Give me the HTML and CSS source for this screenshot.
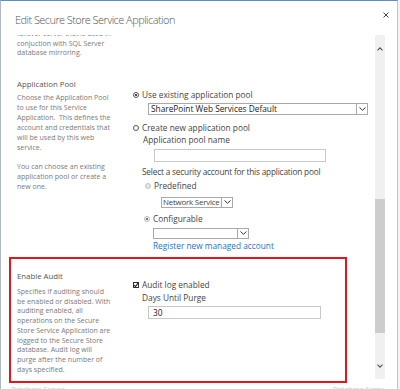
FILE: index.html
```html
<!DOCTYPE html>
<html>
<head>
<meta charset="utf-8">
<link rel="stylesheet" href="styles.css">
</head>
<body>
<div class="dialog">
  <div class="header">
    <div class="title">Edit Secure Store Service Application</div>
    <svg class="close" width="6" height="6" viewBox="0 0 6 6"><path d="M0.5 0.5L5.5 5.5M5.5 0.5L0.5 5.5" stroke="#444" stroke-width="1"/></svg>
  </div>
  <div class="body">
    <div class="content">
      <div class="row row-tail">
        <div class="left">
          <div class="desc">failover server that is used in<br>conjuction with SQL Server<br>database mirroring.</div>
        </div>
        <div class="right"></div>
      </div>

      <div class="row row-pool">
        <div class="left">
          <div class="heading">Application Pool</div>
          <div class="desc desc-pool">Choose the Application Pool<br>to use for this Service<br>Application.&nbsp; This defines the<br>account and credentials that<br>will be used by this web<br>service.<br><br>You can choose an existing<br>application pool or create a<br>new one.</div>
        </div>
        <div class="right right-pool">
          <div class="opt"><span class="radio on"></span><span>Use existing application pool</span></div>
          <div class="select sel-existing"><span class="val">SharePoint Web Services Default</span><span class="arrow"><svg width="7" height="4" viewBox="0 0 7 4"><path d="M0.5 0.5L3.5 3.3L6.5 0.5" fill="none" stroke="#333" stroke-width="1"/></svg></span></div>
          <div class="opt opt-new"><span class="radio"></span><span>Create new application pool</span></div>
          <div class="label lbl-name">Application pool name</div>
          <div class="input inp-name"></div>
          <div class="label lbl-sec">Select a security account for this application pool</div>
          <div class="opt opt-pre"><span class="radio disabled"></span><span>Predefined</span></div>
          <div class="select sel-net"><span class="val">Network Service</span><span class="arrow"><svg width="7" height="4" viewBox="0 0 7 4"><path d="M0.5 0.5L3.5 3.3L6.5 0.5" fill="none" stroke="#333" stroke-width="1"/></svg></span></div>
          <div class="opt opt-conf"><span class="radio on gray"></span><span>Configurable</span></div>
          <div class="select sel-conf"><span class="val"></span><span class="arrow"><svg width="7" height="4" viewBox="0 0 7 4"><path d="M0.5 0.5L3.5 3.3L6.5 0.5" fill="none" stroke="#333" stroke-width="1"/></svg></span></div>
          <a class="link">Register new managed account</a>
        </div>
      </div>

      <div class="row row-audit">
        <div class="left">
          <div class="heading">Enable Audit</div>
          <div class="desc desc-audit">Specifies if auditing should<br>be enabled or disabled. With<br>auditing enabled, all<br>operations on the Secure<br>Store Service Application are<br>logged to the Secure Store<br>database. Audit log will<br>purge after the number of<br>days specified.</div>
        </div>
        <div class="right right-audit">
          <div class="opt"><span class="check"><svg width="6" height="6" viewBox="0 0 6 6"><path d="M1 3L2.4 4.6L5.2 0.9" fill="none" stroke="#222" stroke-width="1.1"/></svg></span><span>Audit log enabled</span></div>
          <div class="label lbl-days">Days Until Purge</div>
          <div class="input inp-days"><span class="val">30</span></div>
        </div>
      </div>
    </div>
    <div class="scrollbar">
      <svg class="sb-up" width="6" height="4" viewBox="0 0 6 4"><path d="M0.5 3.3L3 0.8L5.5 3.3" fill="none" stroke="#555" stroke-width="1.1"/></svg>
      <div class="thumb"></div>
      <svg class="sb-down" width="6" height="4" viewBox="0 0 6 4"><path d="M0.5 0.7L3 3.2L5.5 0.7" fill="none" stroke="#555" stroke-width="1.1"/></svg>
    </div>
  </div>
  <div class="footer"><span>Database Server</span><span>Database Name</span></div>
  <div class="highlight"></div>
</div>
</body>
</html>
```
FILE: styles.css
```css
html, body {
  margin: 0;
  padding: 0;
}
body {
  width: 400px;
  height: 389px;
  overflow: hidden;
  background: #f3f3f3;
  font-family: "Open Sans", "Noto Sans", sans-serif;
}
.dialog {
  position: relative;
  box-sizing: border-box;
  width: 398px;
  height: 389px;
  background: #fff;
  border-top: 1px solid #5f8cc4;
  border-left: 1px solid #aeb9c6;
  border-right: 1px solid #c4c4c4;
  overflow: hidden;
}
.header {
  height: 34px;
  box-sizing: border-box;
  padding: 12px 8px 0 14px;
  display: flex;
  justify-content: space-between;
  align-items: flex-start;
}
.title {
  font-family: "Open Sans Light", "Open Sans", "Noto Sans", sans-serif;
  font-size: 11px;
  line-height: 13px;
  font-weight: 300;
  letter-spacing: -0.55px;
  color: #555;
  white-space: nowrap;
}
.close {
  margin-top: -1px;
}
.body {
  display: flex;
  height: 344px;
}
.content {
  flex: 1;
  overflow: hidden;
  padding-left: 16px;
}
.row {
  display: grid;
  grid-template-columns: 116px 1fr;
  align-items: start;
}
.row-tail {
  margin-top: -6.3px;
}
.row-pool {
  margin-top: 21px;
}
.row-audit {
  margin-top: 19.5px;
}
.heading {
  font-size: 7.8px;
  line-height: 10px;
  color: #555;
  white-space: nowrap;
}
.desc {
  font-size: 7px;
  line-height: 9.85px;
  color: #7a7a7a;
  white-space: nowrap;
}
.desc-pool {
  margin-top: 4.2px;
}
.desc-audit {
  margin-top: 6.3px;
  line-height: 9.75px;
}
.right {
  font-size: 8.3px;
  line-height: 11px;
  color: #444;
  white-space: nowrap;
}
.right-pool {
  padding-top: 9.9px;
}
.right-audit {
  padding-top: 8.5px;
}
.opt {
  display: flex;
  align-items: center;
  gap: 3px;
  height: 11px;
}
.radio {
  box-sizing: border-box;
  width: 6px;
  height: 6px;
  border-radius: 50%;
  border: 1px solid #555;
  background: #fff;
  position: relative;
  flex: none;
}
.radio.on::after {
  content: "";
  position: absolute;
  left: 1px;
  top: 1px;
  width: 2px;
  height: 2px;
  border-radius: 50%;
  background: #111;
}
.radio.disabled {
  border-color: #c4c4c4;
  background: #e4e4e4;
}
.radio.gray {
  border-color: #b4b4b4;
}
.radio.gray::after {
  background: #444;
}
.check {
  box-sizing: border-box;
  width: 6px;
  height: 6px;
  border: 1px solid #333;
  display: flex;
  align-items: center;
  justify-content: center;
  flex: none;
  overflow: visible;
}
.check svg {
  flex: none;
}
.select {
  box-sizing: border-box;
  display: flex;
  height: 11px;
  border: 1px solid #a9a9a9;
  background: #fff;
  color: #222;
}
.select .val {
  flex: 1;
  padding-left: 2px;
  line-height: 9px;
  overflow: hidden;
}
.select .arrow {
  box-sizing: border-box;
  width: 11px;
  border-left: 1px solid #a9a9a9;
  display: flex;
  align-items: center;
  justify-content: center;
  background: #fff;
}
.sel-existing {
  width: 220px;
  margin: 3px 0 0 15px;
  height: 11.5px;
}
.opt-new {
  margin-top: 7.5px;
}
.label {
  height: 11px;
}
.lbl-name {
  margin: 1px 0 0 10px;
}
.input {
  box-sizing: border-box;
  height: 13px;
  border: 1px solid #c8c8c8;
  background: #fff;
  color: #222;
}
.inp-name {
  width: 172px;
  margin: 3.5px 0 0 21px;
}
.lbl-sec {
  margin: 4.5px 0 0 9px;
  letter-spacing: -0.2px;
}
.opt-pre {
  margin: 3px 0 0 12px;
}
.sel-net {
  width: 72px;
  margin: 5.5px 0 0 28px;
}
.sel-net .val {
  padding-left: 1px;
  font-size: 7.9px;
  letter-spacing: -0.2px;
  color: #444;
}
.opt-conf {
  margin: 5.5px 0 0 11px;
}
.sel-conf {
  width: 96px;
  margin: 3.5px 0 0 20px;
}
.link {
  display: block;
  color: #1a73c3;
  margin: 1.5px 0 0 20px;
}
.lbl-days {
  margin: 2px 0 0 9px;
}
.inp-days {
  width: 173px;
  margin: 2.5px 0 0 15px;
}
.inp-days .val {
  display: block;
  padding-left: 4px;
  line-height: 11px;
}
.scrollbar {
  width: 10px;
  margin-right: 12px;
  background: #f0f0f0;
  display: flex;
  flex-direction: column;
  align-items: center;
}
.sb-up {
  margin-top: 12px;
}
.thumb {
  align-self: stretch;
  height: 134px;
  margin-top: 148px;
  background: #cdcdcd;
}
.sb-down {
  margin-top: 31px;
}
.footer {
  height: 10px;
  overflow: hidden;
  display: flex;
  justify-content: space-between;
  padding: 0 12px 0 10px;
  font-size: 7px;
  line-height: 9px;
  color: #c9c9c9;
}
.footer span {
  margin-top: 6px;
}
.highlight {
  position: absolute;
  left: 8px;
  top: 256px;
  width: 338px;
  height: 126px;
  box-sizing: border-box;
  border: 2px solid #e8141c;
  pointer-events: none;
}
```
